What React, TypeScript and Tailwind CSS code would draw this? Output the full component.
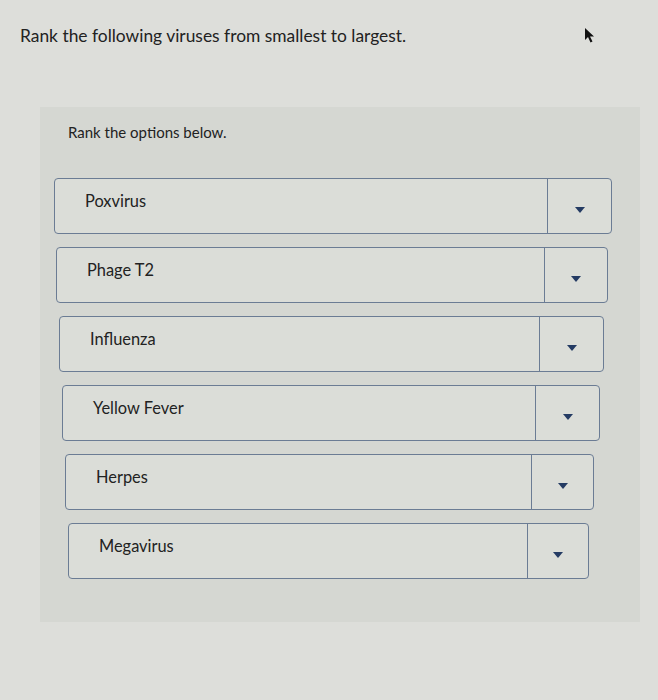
const options = [
  { label: "Poxvirus", row: "ml-[14px] w-[558px]", drop: "w-[64px]" },
  { label: "Phage T2", row: "ml-[16px] w-[552px]", drop: "w-[63px]" },
  { label: "Influenza", row: "ml-[19px] w-[545px]", drop: "w-[64px]" },
  { label: "Yellow Fever", row: "ml-[22px] w-[538px]", drop: "w-[64px]" },
  { label: "Herpes", row: "ml-[25px] w-[529px]", drop: "w-[62px]" },
  { label: "Megavirus", row: "ml-[28px] w-[521px]", drop: "w-[61px]" },
];

export default function App() {
  return (
    <div
      className="relative w-[658px] h-[700px] overflow-hidden bg-[#dddeda] text-[#222]"
      style={{ fontFamily: "Lato, 'Open Sans', sans-serif" }}
    >
      {/* pointer */}
      <svg
        className="absolute left-[584px] top-[27px]"
        width="12"
        height="17"
        viewBox="0 0 12 17"
      >
        <path d="M1 1 L1 13 L4 10 L6.5 15.5 L8.5 14.5 L6 9.5 L10 9.5 Z" fill="#111" />
      </svg>

      <h1 className="pt-[25px] pl-[20px] text-[17.4px] leading-[21px] font-normal">
        Rank the following viruses from smallest to largest.
      </h1>

      <div className="mt-[61px] ml-[40px] w-[600px] h-[515px] bg-[#d5d7d2] pt-[16px]">
        <p className="pl-[28px] text-[15px] leading-[18px]">Rank the options below.</p>

        <div className="mt-[37px] flex flex-col gap-[13px]">
          {options.map((o) => (
            <div
              key={o.label}
              className={`${o.row} h-[56px] flex rounded-[4px] border-[1.5px] border-[#6b7c94] bg-[#dbddd8]`}
            >
              <div className="flex-1 pl-[30px] pt-[12px] text-[16.4px] leading-[20px]">
                {o.label}
              </div>
              <div
                className={`${o.drop} flex items-center justify-center pt-[8px] border-l-[1.5px] border-[#6b7c94]`}
              >
                <svg width="10" height="6" viewBox="0 0 10 6">
                  <path d="M0 0 L10 0 L5 6 Z" fill="#243b63" />
                </svg>
              </div>
            </div>
          ))}
        </div>
      </div>
    </div>
  );
}
